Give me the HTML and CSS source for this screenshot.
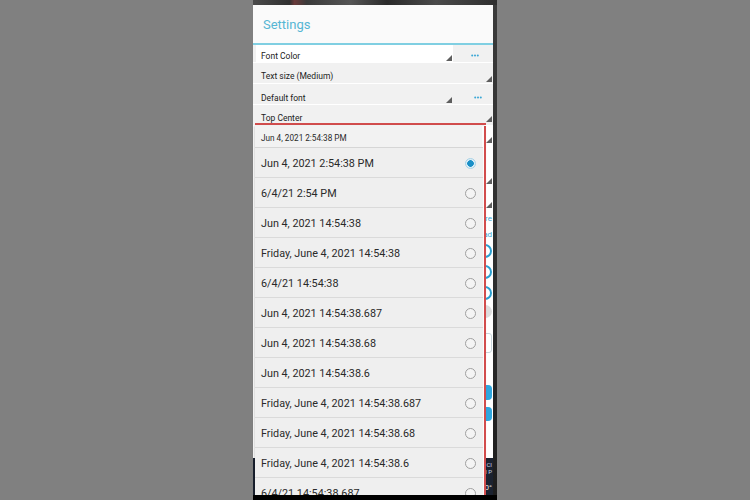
FILE: index.html
```html
<!DOCTYPE html>
<html>
<head>
<meta charset="utf-8">
<link rel="stylesheet" href="styles.css">
</head>
<body>
<div class="stage">
  <div class="phone">
    <div class="topstrip"></div>
    <div class="screen">
      <div class="leftcol">
        <div class="dialog">
          <div class="title">Settings</div>
          <div class="rule"></div>
          <div class="row r1">
            <div class="field white short"><span>Font Color</span><span class="tri"></span></div>
            <div class="dots"><svg width="8" height="3" viewBox="0 0 8 3"><circle cx="1.2" cy="1.5" r="1" fill="#3aa7d6"/><circle cx="4" cy="1.5" r="1" fill="#3aa7d6"/><circle cx="6.8" cy="1.5" r="1" fill="#3aa7d6"/></svg></div>
          </div>
          <div class="row r2">
            <div class="field full"><span>Text size (Medium)</span><span class="tri"></span></div>
          </div>
          <div class="row r3">
            <div class="field short"><span>Default font</span><span class="tri"></span></div>
            <div class="dots"><svg width="8" height="3" viewBox="0 0 8 3"><circle cx="1.2" cy="1.5" r="1" fill="#3aa7d6"/><circle cx="4" cy="1.5" r="1" fill="#3aa7d6"/><circle cx="6.8" cy="1.5" r="1" fill="#3aa7d6"/></svg></div>
          </div>
          <div class="row r4">
            <div class="field focus"><span>Top Center</span></div>
            <span class="tri"></span>
          </div>
          <div class="under">
            <div class="u h19"><span class="tri"></span></div>
            <div class="u h41"><span class="tri"></span></div>
            <div class="u h24"><span class="tri"></span></div>
            <div class="u h19 mid"><span class="link">More</span></div>
            <div class="u h12 mid"><span class="link">Load</span></div>
            <div class="u h21 mid"><span class="ring"></span></div>
            <div class="u h21 mid"><span class="ring"></span></div>
            <div class="u h21 mid"><span class="ring"></span></div>
            <div class="u h17 mid"><span class="knob"></span></div>
            <div class="u h13"></div>
            <div class="u h20 mid"><span class="box"></span></div>
            <div class="u h32"></div>
            <div class="u h15 mid"><span class="btn"></span></div>
            <div class="u h7"></div>
            <div class="u h14 mid"><span class="btn"></span></div>
          </div>
        </div>
        <div class="below">
          <span class="tiny">• CI</span>
          <span class="tiny">TH P</span>
          <span class="temp">60°</span>
        </div>
      </div>
      <div class="rightstrip"></div>

      <div class="popup">
        <div class="pophead">Jun 4, 2021 2:54:38 PM</div>
        <div class="list">
          <div class="item"><span>Jun 4, 2021 2:54:38 PM</span><span class="radio on"></span></div>
          <div class="item"><span>6/4/21 2:54 PM</span><span class="radio"></span></div>
          <div class="item"><span>Jun 4, 2021 14:54:38</span><span class="radio"></span></div>
          <div class="item"><span>Friday, June 4, 2021 14:54:38</span><span class="radio"></span></div>
          <div class="item"><span>6/4/21 14:54:38</span><span class="radio"></span></div>
          <div class="item"><span>Jun 4, 2021 14:54:38.687</span><span class="radio"></span></div>
          <div class="item"><span>Jun 4, 2021 14:54:38.68</span><span class="radio"></span></div>
          <div class="item"><span>Jun 4, 2021 14:54:38.6</span><span class="radio"></span></div>
          <div class="item"><span>Friday, June 4, 2021 14:54:38.687</span><span class="radio"></span></div>
          <div class="item"><span>Friday, June 4, 2021 14:54:38.68</span><span class="radio"></span></div>
          <div class="item"><span>Friday, June 4, 2021 14:54:38.6</span><span class="radio"></span></div>
          <div class="item"><span>6/4/21 14:54:38.687</span><span class="radio"></span></div>
        </div>
      </div>
    </div>
    <div class="navbar"></div>
  </div>
</div>
</body>
</html>
```

FILE: styles.css
```css
* { box-sizing: border-box; }
html, body { margin: 0; padding: 0; }
body {
  background: #808080;
  font-family: Roboto, "Noto Sans", "Liberation Sans", sans-serif;
}
.stage {
  width: 750px;
  height: 500px;
  display: flex;
  justify-content: center;
  overflow: hidden;
}
.phone {
  width: 244px;
  height: 500px;
  display: flex;
  flex-direction: column;
  background: #2b2b2b;
}
.topstrip {
  height: 5px;
  background: linear-gradient(90deg, #4b4b4b, #303030 15%, #6a3a3a 17%, #3a3a3a 22%, #555 40%, #2a2a2a 55%, #4a4a4a 75%, #2e2e2e);
}
.screen {
  flex: 1;
  position: relative;
  display: flex;
  min-height: 0;
}
.leftcol {
  width: 240px;
  display: flex;
  flex-direction: column;
}
.rightstrip {
  width: 4px;
  background: linear-gradient(180deg, #3a3a3a, #2c2c2c 60%, #1c1c1c);
}
.navbar {
  height: 5px;
  background: #000;
}
.dialog {
  height: 453px;
  background: #f1f1f1;
  display: flex;
  flex-direction: column;
}
.title {
  height: 38px;
  background: #fafafa;
  display: flex;
  align-items: center;
  padding-left: 10px;
  font-size: 13px;
  color: #55b6d4;
}
.rule {
  height: 2px;
  background: #80cfe2;
}
.row {
  display: flex;
  color: #222;
  font-size: 8.5px;
  line-height: 10px;
  border-bottom: 1px solid #fff;
}
.r1 { height: 18px; }
.r2 { height: 21px; }
.r3 { height: 21px; }
.r4 { height: 20px; border-bottom: none; }
.field {
  display: flex;
  align-items: flex-start;
  padding: 6px 1px 1px 5px;
  margin-left: 3px;
}
.r2 .field { padding-top: 8px; }
.r3 .field { padding-top: 9px; }
.field.white { background: #fff; }
.field.short { width: 197px; }
.field.full { flex: 1; }
.field.focus {
  width: 232px;
  margin-left: 2px;
  padding: 8px 0 0 6px;
  border-bottom: 2px solid #d24d4d;
}
.tri {
  margin-left: auto;
  align-self: flex-end;
  width: 0;
  height: 0;
  border-style: solid;
  border-width: 0 0 6px 6px;
  border-color: transparent transparent #5e5e5e transparent;
}
.r4 .tri { margin-bottom: 3px; margin-right: 1px; }
.dots {
  flex: 1;
  display: flex;
  align-items: flex-start;
  padding: 9px 0 0 18px;
}
.r3 .dots { padding-top: 12px; padding-left: 21px; }
.dots svg { display: block; }

.under {
  flex: 1;
  display: flex;
  flex-direction: column;
  background: #fff;
}
.u {
  display: flex;
  justify-content: flex-end;
  align-items: flex-end;
  padding-right: 1px;
}
.u.mid { align-items: center; }
.h7 { height: 7px; }
.h12 { height: 12px; }
.h13 { height: 13px; }
.h14 { height: 14px; }
.h15 { height: 15px; }
.h17 { height: 17px; }
.h19 { height: 19px; }
.h20 { height: 20px; }
.h21 { height: 21px; }
.h24 { height: 24px; }
.h32 { height: 32px; }
.h41 { height: 41px; }
.u .tri { margin-bottom: 1px; }
.link {
  font-size: 8px;
  color: #3aa7d6;
}
.ring {
  width: 14px;
  height: 14px;
  border: 2px solid #2a9fd0;
  border-radius: 50%;
}
.knob {
  width: 13px;
  height: 13px;
  border-radius: 50%;
  background: #dedede;
}
.box {
  width: 22px;
  height: 20px;
  border: 1px solid #c9d6dc;
  border-radius: 3px;
}
.btn {
  width: 22px;
  height: 100%;
  border-radius: 4px;
  background: #2fa6de;
}
.below {
  flex: 1;
  background: #1b2230;
  display: flex;
  flex-direction: column;
  align-items: flex-end;
  padding: 3px 1px 0 0;
  color: #c9d3e3;
  font-size: 6px;
  line-height: 7px;
}
.temp {
  margin-top: auto;
  margin-bottom: 4px;
  font-size: 8px;
  color: #e7e7e7;
}

.popup {
  position: absolute;
  left: 2px;
  top: 121px;
  bottom: 0;
  width: 231px;
  background: #fbfbfb;
  border-right: 2px solid #d24d4d;
  display: flex;
  flex-direction: column;
  overflow: hidden;
  box-shadow: -1px 0 2px rgba(0, 0, 0, 0.18);
}
.pophead {
  height: 21px;
  flex: none;
  margin-right: 2px;
  background: #f2f2f2;
  display: flex;
  align-items: center;
  padding: 3px 0 0 6px;
  font-size: 8.2px;
  color: #2a2a2a;
}
.list {
  margin-right: 1px;
  border-top: 1px solid #d6d6d6;
  background: #efefef;
  flex: 1;
}
.item {
  height: 30px;
  flex: none;
  display: flex;
  align-items: center;
  justify-content: space-between;
  padding: 2px 7px 0 6px;
  border-bottom: 1px solid #dadada;
  font-size: 10.8px;
  color: #2a2a2a;
}
.radio {
  width: 11px;
  height: 11px;
  border: 1px solid #a0a0a0;
  border-radius: 50%;
  background: #f4f4f4;
}
.radio.on {
  border-color: #a8d2e6;
  background: radial-gradient(circle, #1a8fc7 0 3px, #dceef7 3.6px);
}
```
